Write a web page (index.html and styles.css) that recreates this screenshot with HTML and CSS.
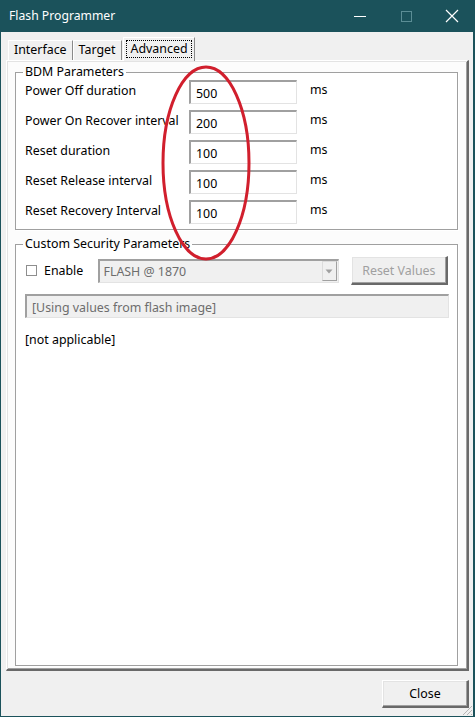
FILE: index.html
```html
<!DOCTYPE html>
<html lang="en">
<head>
    <meta charset="UTF-8">
    <title>Flash Programmer</title>
    <link rel="stylesheet" href="styles.css">
</head>
<body>
    <div class="window">
        <div class="titlebar">
            <span class="title">Flash Programmer</span>
            <div class="controls">
                <span class="ctl"><svg width="14" height="14" viewBox="0 0 14 14"><path d="M1 7.5h12" stroke="#fff" stroke-width="1"/></svg></span>
                <span class="ctl"><svg width="14" height="14" viewBox="0 0 14 14"><rect x="2.5" y="2.5" width="10" height="10" fill="none" stroke="#5b8d95" stroke-width="1"/></svg></span>
                <span class="ctl"><svg width="14" height="14" viewBox="0 0 14 14"><path d="M1 1L13 13M13 1L1 13" stroke="#fff" stroke-width="1.2"/></svg></span>
            </div>
        </div>
        <div class="client">
            <div class="tabs">
                <div class="tab">Interface</div>
                <div class="tab">Target</div>
                <div class="tab active"><span class="focus">Advanced</span></div>
            </div>
            <div class="panel">
                <fieldset class="group bdm">
                    <legend>BDM Parameters</legend>
                    <div class="param">
                        <span class="lbl">Power Off duration</span>
                        <span class="edit">500</span>
                        <span class="unit">ms</span>
                    </div>
                    <div class="param">
                        <span class="lbl">Power On Recover interval</span>
                        <span class="edit">200</span>
                        <span class="unit">ms</span>
                    </div>
                    <div class="param">
                        <span class="lbl">Reset duration</span>
                        <span class="edit">100</span>
                        <span class="unit">ms</span>
                    </div>
                    <div class="param">
                        <span class="lbl">Reset Release interval</span>
                        <span class="edit">100</span>
                        <span class="unit">ms</span>
                    </div>
                    <div class="param">
                        <span class="lbl">Reset Recovery Interval</span>
                        <span class="edit">100</span>
                        <span class="unit">ms</span>
                    </div>
                    <svg class="ring" width="96" height="200" viewBox="0 0 96 200">
                        <ellipse cx="48" cy="100" rx="43" ry="96" fill="none" stroke="#d11f2d" stroke-width="3"/>
                    </svg>
                </fieldset>
                <fieldset class="group security">
                    <legend>Custom Security Parameters</legend>
                    <div class="sec-row">
                        <label class="check"><span class="box"></span>Enable</label>
                        <div class="combo">
                            <span>FLASH @ 1870</span>
                            <span class="drop"><svg width="8" height="5" viewBox="0 0 8 5"><path d="M0.5 0.5h7L4 4.5z" fill="#a0a0a0"/></svg></span>
                        </div>
                        <div class="btn disabled">Reset Values</div>
                    </div>
                    <div class="edit wide">[Using values from flash image]</div>
                    <div class="note">[not applicable]</div>
                </fieldset>
            </div>
            <div class="footer">
                <div class="btn close">Close</div>
            </div>
            <svg class="grip" width="12" height="12" viewBox="0 0 12 12">
                <path d="M11 2L2 11M11 6L6 11M11 10L10 11" stroke="#b5b5b5" stroke-width="1"/>
            </svg>
        </div>
    </div>
</body>
</html>
```

FILE: styles.css
```css
body {
    margin: 0;
    background: #1b525b; /* window frame */
    font-family: "Noto Sans", "Open Sans", sans-serif;
    font-size: 12.4px;
    color: #000;
}
.window {
    width: 475px;
    height: 717px;
    display: flex;
    flex-direction: column;
}
.titlebar {
    height: 32px;
    display: flex;
    align-items: center;
    justify-content: space-between;
    color: #fff;
    padding-left: 9px;
}
.title {
    font-size: 12.2px;
    margin-top: -1px;
}
.controls {
    display: flex;
    height: 32px;
}
.ctl {
    width: 46px;
    display: flex;
    align-items: center;
    justify-content: center;
}
.client {
    position: relative;
    flex: 1;
    background: #f0f0f0;
    margin: 0 2px 1px 1px;
    padding: 6px 4px 0 5px;
    display: flex;
    flex-direction: column;
}
.tabs {
    display: flex;
    align-items: flex-end;
    height: 22px;
    padding-left: 2px;
    position: relative;
    z-index: 1;
}
.tab {
    height: 19px;
    padding: 0 5px;
    line-height: 18px;
    border: 1px solid #d9d9d9;
    border-top-color: #fff;
    border-left-color: #fff;
    border-right: 1px solid #8a8a8a;
    border-bottom: none;
}
.tab.active {
    height: 23px;
    margin-bottom: -1px;
    background: #f0f0f0;
    padding: 0 2px;
    margin-left: 1px;
}
.focus {
    display: block;
    margin-top: 2px;
    padding: 0 3px 0 4px;
    line-height: 16px;
    border: 1px dotted #000;
}
.panel {
    height: 611px;
    box-sizing: border-box;
    background: #fcfcfc;
    border-top: 1px solid #fff;
    border-left: 1px solid #fff;
    border-right: 2px solid #696969;
    border-bottom: 2px solid #696969;
    box-shadow: inset 1px 1px #e3e3e3, inset -1px -1px #a0a0a0;
    padding: 3px 9px 3px 8px;
    display: flex;
    flex-direction: column;
}
.group {
    position: relative;
    margin: 0;
    border: 1px solid #a0a0a0;
    box-shadow: 1px 1px #fff, inset 1px 1px #fff;
    padding: 0 9px;
    min-width: 0;
    background: #fff;
}
.group legend {
    padding: 0 2px;
    margin-left: -2px;
    line-height: 16px;
}
.bdm {
    height: 166px;
    box-sizing: border-box;
    display: flex;
    flex-direction: column;
    gap: 6px;
}
.param {
    display: grid;
    grid-template-columns: 151px 108px auto;
    column-gap: 13px;
    align-items: center;
    height: 24px;
}
.lbl {
    margin-top: -4px;
    white-space: nowrap;
}
.unit {
    margin-top: -6px;
}
.edit {
    box-sizing: border-box;
    height: 24px;
    line-height: 20px;
    padding: 2px 5px 0;
    background: #fff;
    border-top: 2px solid #a0a0a0;
    border-left: 2px solid #a0a0a0;
    border-right: 1px solid #e3e3e3;
    border-bottom: 1px solid #e3e3e3;
}
.ring {
    position: absolute;
    z-index: 2;
    left: 142px;
    top: -17px;
}
.security {
    flex: 1;
    margin-top: 6px;
    padding-top: 4px;
}
.sec-row {
    display: flex;
    align-items: center;
    height: 29px;
}
.check {
    display: flex;
    align-items: center;
    width: 73px;
    margin-left: 1px;
}
.box {
    width: 9px;
    height: 9px;
    border: 1px solid #8e8e8e;
    background: #fff;
    margin-right: 7px;
}
.combo {
    box-sizing: border-box;
    width: 242px;
    height: 24px;
    display: flex;
    align-items: center;
    justify-content: space-between;
    background: #f0f0f0;
    color: #6d6d6d;
    padding-left: 3px;
    border-top: 2px solid #a0a0a0;
    border-left: 2px solid #a0a0a0;
    border-right: 1px solid #e3e3e3;
    border-bottom: 1px solid #e3e3e3;
}
.drop {
    width: 15px;
    height: 20px;
    margin-right: 1px;
    display: flex;
    align-items: center;
    justify-content: center;
    border: 1px solid #dcdcdc;
    border-right-color: #a0a0a0;
    border-bottom-color: #a0a0a0;
    box-sizing: border-box;
}
.btn {
    box-sizing: border-box;
    display: flex;
    align-items: center;
    justify-content: center;
    background: #f0f0f0;
    border-top: 1px solid #fff;
    border-left: 1px solid #fff;
    border-right: 2px solid #696969;
    border-bottom: 2px solid #696969;
    box-shadow: inset -1px -1px #a0a0a0, inset 1px 1px #e3e3e3;
}
.btn.disabled {
    width: 98px;
    height: 29px;
    margin-left: 12px;
    color: #a0a0a0;
}
.wide {
    margin-top: 9px;
    width: 424px;
    background: #f0f0f0;
    color: #6d6d6d;
}
.note {
    margin-top: 13px;
}
.footer {
    display: flex;
    justify-content: flex-end;
    padding-top: 9px;
}
.btn.close {
    width: 87px;
    height: 28px;
}
.grip {
    position: absolute;
    right: 0;
    bottom: 0;
}
```
